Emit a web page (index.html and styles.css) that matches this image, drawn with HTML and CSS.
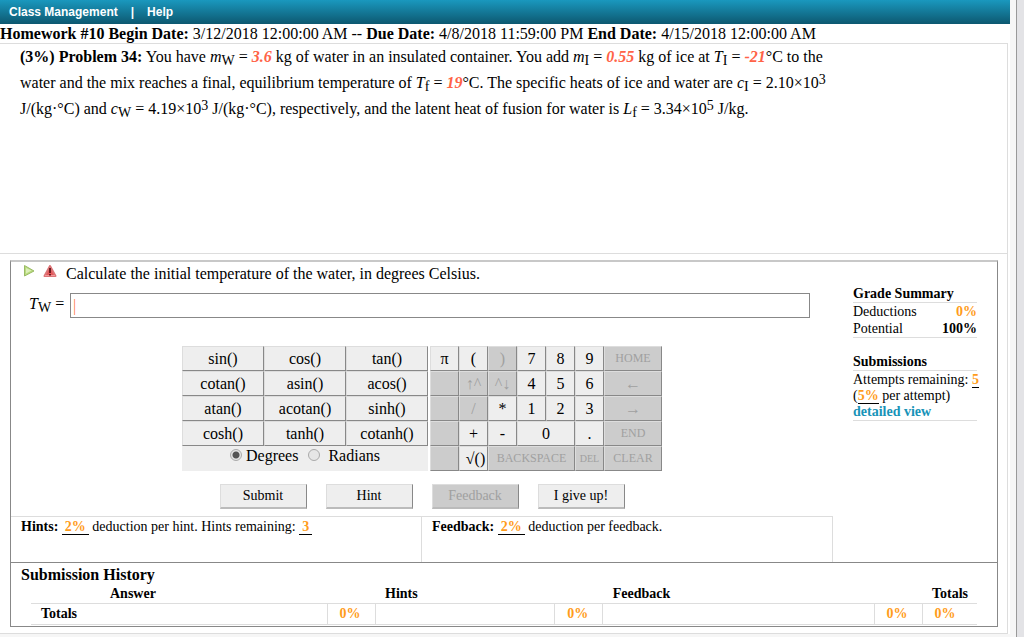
FILE: index.html
```html
<!DOCTYPE html>
<html lang="en">
<head>
<meta charset="utf-8">
<title>Homework #10</title>
<link rel="stylesheet" href="styles.css">
</head>
<body>
<div class="window">
<main class="page">
  <nav class="nav"><a href="#">Class Management</a><span>|</span><a href="#">Help</a></nav>
  <div class="frame">
    <header class="dates"><b>Homework #10 Begin Date:</b> 3/12/2018 12:00:00 AM -- <b>Due Date:</b> 4/8/2018 11:59:00 PM <b>End Date:</b> 4/15/2018 12:00:00 AM</header>
    <section class="content">
      <p class="problem"><b>(3%) Problem 34:</b> You have <i>m</i><sub>W</sub> = <em>3.6</em> kg of water in an insulated container. You add <i>m</i><sub>I</sub> = <em>0.55</em> kg of ice at <i>T</i><sub>I</sub> = <em>-21</em>°C to the<br>water and the mix reaches a final, equilibrium temperature of <i>T</i><sub>f</sub> = <em>19</em>°C. The specific heats of ice and water are <i>c</i><sub>I</sub> = 2.10×10<sup>3</sup><br>J/(kg·°C) and <i>c</i><sub>W</sub> = 4.19×10<sup>3</sup> J/(kg·°C), respectively, and the latent heat of fusion for water is <i>L</i><sub>f</sub> = 3.34×10<sup>5</sup> J/kg.</p>
      <div class="panel">
        <div class="top">
          <form class="work">
            <div class="question">
              <svg class="play" viewBox="0 0 12 14" aria-hidden="true"><path d="M1.500 1.500v10.500l9.500-5z" fill="#b9dc7e" stroke="#9aba66" stroke-linejoin="round"/><path d="M3 4v5.500l5.500-3z" fill="#dcefb8"/></svg>
              <svg class="warn" viewBox="0 0 14 14" aria-hidden="true"><path d="M7 2L1.500 12h11z" fill="#e4595c" stroke="#dc7477" stroke-width="2" stroke-linejoin="round"/><path d="M2 11.500h10" stroke="#f09a9c"/><path d="M7 4v5M7 10v1.500" stroke="#6d1a1d" stroke-width="2"/></svg>
              <span>Calculate the initial temperature of the water, in degrees Celsius.</span>
            </div>
            <div class="answer"><label for="tw"><i>T</i><sub>W</sub> =</label><input id="tw" type="text" value="|"></div>
            <div class="pads">
              <div class="functions">
                <button type="button">sin()</button><button type="button">cos()</button><button type="button">tan()</button>
                <button type="button">cotan()</button><button type="button">asin()</button><button type="button">acos()</button>
                <button type="button">atan()</button><button type="button">acotan()</button><button type="button">sinh()</button>
                <button type="button">cosh()</button><button type="button">tanh()</button><button type="button">cotanh()</button>
                <div class="units"><input type="radio" name="unit" id="deg" checked><label for="deg">Degrees</label><input type="radio" name="unit" id="rad" class="second"><label for="rad">Radians</label></div>
              </div>
              <div class="keys">
                <button type="button">π</button><button type="button">(</button><button type="button" disabled>)</button><button type="button">7</button><button type="button">8</button><button type="button">9</button><button type="button" class="word" disabled>HOME</button>
                <button type="button" disabled aria-label="Blank"></button><button type="button" disabled>↑^</button><button type="button" disabled>^↓</button><button type="button">4</button><button type="button">5</button><button type="button">6</button><button type="button" disabled>←</button>
                <button type="button" disabled aria-label="Blank"></button><button type="button" disabled>/</button><button type="button">*</button><button type="button">1</button><button type="button">2</button><button type="button">3</button><button type="button" disabled>→</button>
                <button type="button" disabled aria-label="Blank"></button><button type="button">+</button><button type="button">-</button><button type="button" class="two">0</button><button type="button">.</button><button type="button" class="word" disabled>END</button>
                <button type="button" disabled aria-label="Blank"></button><button type="button" class="root">√()</button><button type="button" class="word three" disabled>BACKSPACE</button><button type="button" class="tiny" disabled>DEL</button><button type="button" class="word" disabled>CLEAR</button>
              </div>
            </div>
            <div class="actions"><button type="submit">Submit</button><button type="button">Hint</button><button type="button" disabled>Feedback</button><button type="button">I give up!</button></div>
            <div class="help">
              <div><b>Hints:</b> <strong class="fill">2%</strong> deduction per hint. Hints remaining: <strong class="fill">3</strong></div>
              <div><b>Feedback:</b> <strong class="fill">2%</strong> deduction per feedback.</div>
            </div>
          </form>
          <aside class="side">
            <h2>Grade Summary</h2>
            <dl><dt>Deductions</dt><dd class="orange">0%</dd><dt>Potential</dt><dd>100%</dd></dl>
            <h2>Submissions</h2>
            <div class="attempts">Attempts remaining: <strong>5</strong><br>(<strong>5%</strong> per attempt)<br><a href="#">detailed view</a></div>
          </aside>
        </div>
        <section class="history">
          <h2>Submission History</h2>
          <table>
            <colgroup><col class="c-label"><col class="c-answer"><col class="c-pct"><col class="c-hints"><col class="c-pct"><col><col class="c-pct"><col class="c-total"></colgroup>
            <thead><tr><th></th><th>Answer</th><th></th><th>Hints</th><th></th><th>Feedback</th><th></th><th>Totals</th></tr></thead>
            <tbody><tr><th colspan="2">Totals</th><td>0%</td><td></td><td>0%</td><td></td><td>0%</td><td>0%</td></tr></tbody>
          </table>
        </section>
      </div>
    </section>
  </div>
</main>
</div>
</body>
</html>
```
FILE: styles.css
```css
* { box-sizing: border-box; }
body {
  margin: 0;
  background: #e3e3e6;
  color: #000;
  font-family: "Liberation Serif", "Times New Roman", serif;
  font-size: 16px;
}
h2, p, dl, dd { margin: 0; }
sub, sup { font-size: 14px; line-height: 0; }
sub { vertical-align: -3px; }
sup { vertical-align: 4px; }
button, input { font-family: inherit; }
.window {
  min-height: 100vh;
  margin-right: 7px;
  padding-right: 6px;
  border-right: 1px solid #999;
  background: #f6f6f6;
}
.nav {
  display: flex;
  gap: 13px;
  height: 24px;
  padding-left: 9px;
  background: linear-gradient(#1a98be, #0d5870);
  color: #fff;
  font: bold 12px/24px "Liberation Sans", Arial, sans-serif;
}
.nav a { color: #fff; text-decoration: none; }
.frame { padding-right: 2px; background: #fff; }
.dates { height: 19px; line-height: 20px; white-space: nowrap; }
.content {
  padding-bottom: 6px;
  border: 1px solid #ddd;
  border-left: 0;
}
.problem {
  min-height: 210px;
  padding-left: 20px;
  border-bottom: 1px solid #ddd;
  line-height: 26px;
}
.problem em { color: #ff6347; font-weight: bold; }
.panel {
  margin: 6px 9px 0 10px;
  border: 1px solid #888;
  border-top: 2px solid #c8c8c8;
}
.top { display: flex; border-bottom: 1px solid #888; }
.work { flex: 1; }
.question {
  display: flex;
  align-items: flex-start;
  padding: 2px 0 0 12px;
  line-height: 20px;
}
.play { width: 12px; height: 14px; }
.warn { width: 14px; height: 14px; margin: 0 9px 0 8px; }
.answer {
  display: flex;
  margin: 9px 23px 0 18px;
  line-height: 22px;
}
.answer label { width: 41px; }
.answer input {
  flex: 1;
  height: 25px;
  padding: 0 2px;
  border: 1px solid #888;
  color: #ff7f50;
  font-size: 16px;
}
.pads { display: flex; justify-content: center; gap: 2px; margin-top: 28px; }
.functions, .keys { display: grid; grid-auto-rows: 25px; }
.functions { grid-template-columns: repeat(3, 82px); }
.keys { grid-template-columns: repeat(6, 29px) 58px; }
button {
  padding: 0;
  border: 1px solid #ddd;
  border-right-color: #888;
  border-bottom-color: #888;
  background: #eee;
  color: #000;
  font-size: 16px;
}
button:disabled { background: #ccc; color: #a0a0a0; }
.keys .word { font-size: 12px; }
.keys .tiny { font-size: 10px; }
.keys .root { padding-left: 4px; }
.two { grid-column: span 2; }
.three { grid-column: span 3; }
.units {
  grid-column: 1 / -1;
  display: flex;
  justify-content: center;
  background: #eee;
  line-height: 20px;
}
.units input {
  appearance: none;
  width: 12px;
  height: 12px;
  margin: 3px 4px 0 0;
  border: 1px solid #aaa;
  border-radius: 50%;
  background: #e6e6e6;
}
.units input:checked { background: radial-gradient(circle, #555 0 3px, #e6e6e6 4px); }
.units .second { margin: 3px 8px 0 10px; }
.actions { display: flex; justify-content: center; gap: 19px; margin: 13px 0 7px; }
.actions button {
  width: 87px;
  height: 25px;
  border-bottom: 2px solid #bbb;
  font-size: 14px;
}
.help {
  display: flex;
  height: 46px;
  border-top: 1px solid #ddd;
  font-size: 14px;
  line-height: 20px;
  white-space: nowrap;
}
.help div { flex: 1; padding-left: 10px; border-right: 1px solid #ddd; }
.fill, .side strong { border-bottom: 1px solid #000; color: #ff9c1a; }
.fill { padding: 0 3px; }
.side {
  width: 124px;
  margin: 24px 20px 0;
  font-size: 14px;
  line-height: 16px;
  white-space: nowrap;
}
.side h2 { font-size: 14px; }
.side dl {
  display: grid;
  grid-template-columns: 1fr auto;
  margin-bottom: 16px;
  border: solid #ddd;
  border-width: 1px 0;
  line-height: 17px;
}
.side dd { font-weight: bold; text-align: right; }
.side .orange { color: #ff9c1a; }
.attempts { padding-top: 1px; border: solid #ddd; border-width: 1px 0; }
.attempts a { color: #1893b8; font-weight: bold; text-decoration: none; }
.history { padding: 2px 20px 1px 10px; }
.history h2 { font-size: 16px; line-height: 20px; }
.history table {
  width: calc(100% - 10px);
  margin-left: 10px;
  border-collapse: collapse;
  table-layout: fixed;
  font-size: 14px;
  font-weight: bold;
}
.history th { padding: 0 0 0 10px; line-height: 18px; text-align: left; }
.history tbody tr { height: 21px; border: solid #ddd; border-width: 1px 0; }
.history td { padding: 0 0 0 12px; border-left: 1px solid #ddd; color: #ff9c1a; }
.c-label { width: 69px; }
.c-answer { width: 24%; }
.c-pct { width: 48px; }
.c-hints { width: 19%; }
.c-total { width: 55px; }
```
